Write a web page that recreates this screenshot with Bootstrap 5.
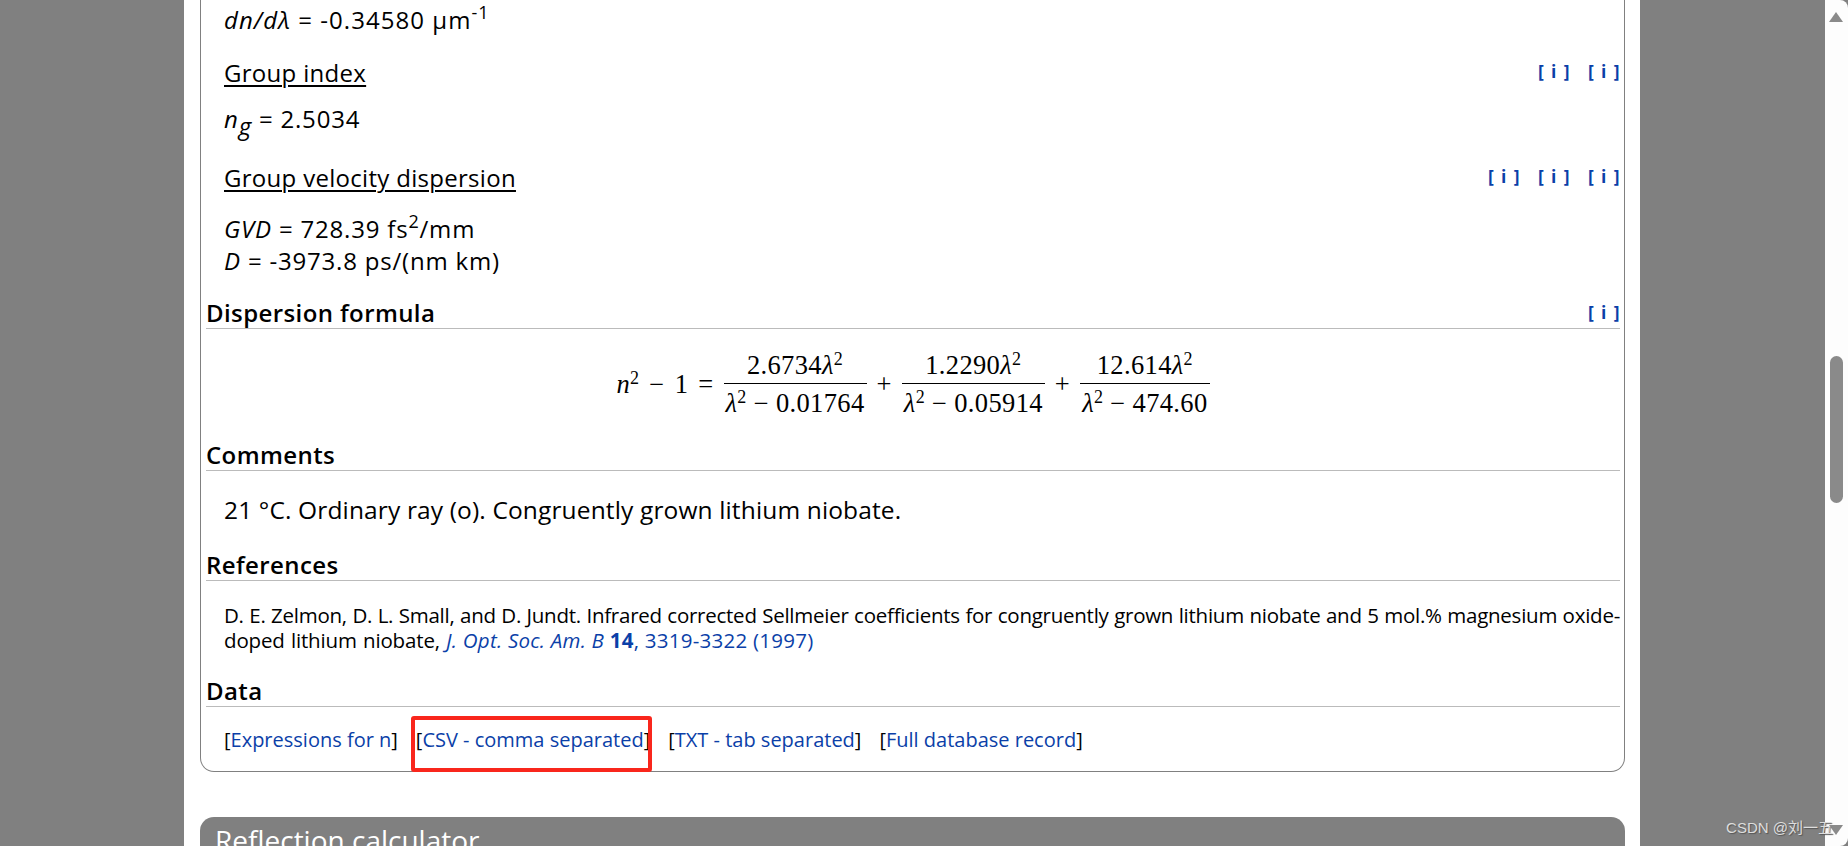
<!DOCTYPE html>
<html lang="en">
<head>
  <meta charset="UTF-8" />
  <title>Refractive index</title>
  <link href="https://cdn.jsdelivr.net/npm/bootstrap@5.3.3/dist/css/bootstrap.min.css" rel="stylesheet">
  <style>
    html, body { height: 846px; overflow: hidden; }
    body {
      background-color: #808080;
      font-family: "Open Sans", "Noto Sans", sans-serif;
      color: #000;
      position: relative;
    }
    a { color: #0b3fa8; text-decoration: none; }
    .page-col {
      width: 1456px;
      height: 846px;
      margin-left: 184px;
      background: #fff;
      padding: 0 15px 0 16px;
      overflow: hidden;
    }
    .info-panel {
      border: 1px solid #808080;
      border-top: 0;
      border-radius: 0 0 14px 14px;
      padding: 0 4px 0 5px;
      height: 772px;
    }
    .sect-title {
      font-size: 24px;
      font-weight: 600;
      letter-spacing: .4px;
      line-height: 26px;
      border-bottom: 1px solid #bbb;
      height: 29px;
    }
    .prop-block { padding-left: 18px; font-size: 24px; letter-spacing: .8px; line-height: 32px; }
    .prop-first { padding-top: 4px; letter-spacing: 1.05px; }
    .prop-title { letter-spacing: .3px; text-decoration: underline; text-decoration-thickness: 2px; text-underline-offset: 3px; }
    .prop-block sup { font-size: 75%; top: -.55em; }
    .prop-block sub { font-size: 100%; bottom: -.3em; }
    .info-links { font-size: 17.5px; font-weight: 700; letter-spacing: 1.4px; line-height: 24px; gap: 17px; margin: 0 -1px 4px 0; }
    .comment-txt { padding-left: 18px; font-size: 24.5px; letter-spacing: .14px; line-height: 32px; }
    .ref-txt { padding-left: 18px; font-size: 20.5px; letter-spacing: -.25px; word-spacing: -1px; line-height: 25px; text-align: justify; }
    .ref-tail { word-spacing: 1px; letter-spacing: -.15px; }
    .ref-txt a { letter-spacing: .25px; word-spacing: 0; }
    .data-links { padding-left: 18px; font-size: 20px; line-height: 26px; gap: 18px; }
    .math-row {
      font-family: "Liberation Serif", serif;
      font-size: 26.5px;
      letter-spacing: .35px;
      height: 113px;
      padding-bottom: 2px;
      gap: 10px;
    }
    .math-lhs { word-spacing: 3px; }
    .math-frac { text-align: center; }
    .math-frac > div { padding: 0 2px; line-height: 31px; white-space: nowrap; }
    .math-frac > div:first-child { border-bottom: 1px solid #000; padding-bottom: 2px; }
    .math-frac > div:last-child { padding-top: 4px; }
    .math-row sup { font-size: 68%; top: -.5em; }
    .csv-box {
      position: absolute;
      left: 411px;
      top: 716px;
      width: 241px;
      height: 56px;
      border: 4px solid #f9261c;
      border-radius: 3px;
    }
    .calc-head {
      background: #808080;
      color: #fff;
      border-radius: 14px 14px 0 0;
      margin-top: 45px;
      height: 60px;
      font-size: 28px;
      padding: 2px 15px;
    }
    .scroll-rail {
      position: absolute;
      top: 0; right: 0;
      width: 23px;
      height: 846px;
      background: #fdfdfd;
      border-radius: 0 8px 8px 0;
    }
    .scroll-thumb {
      position: absolute;
      left: 5px;
      top: 356px;
      width: 13px;
      height: 147px;
      background: #8a8a8a;
      border-radius: 7px;
    }
    .scroll-up, .scroll-down {
      position: absolute;
      left: 4px;
      width: 0; height: 0;
      border-left: 7px solid transparent;
      border-right: 7px solid transparent;
    }
    .scroll-up { top: 12px; border-bottom: 10px solid #8a8a8a; }
    .scroll-down { top: 825px; border-top: 10px solid #8a8a8a; }
    .watermark {
      position: absolute;
      right: 15px;
      top: 817px;
      font-family: "Liberation Sans", "Noto Sans CJK SC", sans-serif;
      font-size: 15px;
      line-height: 21px;
      color: #ddd;
      text-shadow: 1px 1px 1px #555;
    }
  </style>
</head>
<body>
  <div class="page-col">
    <div class="info-panel">
      <div class="prop-block prop-first"><i>dn/dλ</i> = -0.34580 µm<sup>-1</sup></div>

      <div class="d-flex justify-content-between align-items-center" style="margin-top:21px">
        <div class="prop-block prop-title">Group index</div>
        <div class="info-links d-flex"><a href="#">[ i ]</a><a href="#">[ i ]</a></div>
      </div>
      <div class="prop-block" style="margin-top:14px"><i>n<sub>g</sub></i> = 2.5034</div>

      <div class="d-flex justify-content-between align-items-center" style="margin-top:27px">
        <div class="prop-block prop-title">Group velocity dispersion</div>
        <div class="info-links d-flex"><a href="#">[ i ]</a><a href="#">[ i ]</a><a href="#">[ i ]</a></div>
      </div>
      <div class="prop-block" style="margin-top:19px"><i>GVD</i> = 728.39 fs<sup>2</sup>/mm<br><i>D</i> = -3973.8 ps/(nm km)</div>

      <div class="sect-title d-flex justify-content-between" style="margin-top:23px">
        <span>Dispersion formula</span>
        <span class="info-links d-flex"><a href="#">[ i ]</a></span>
      </div>
      <div class="math-row d-flex justify-content-center align-items-center">
        <span class="math-lhs"><i>n</i><sup>2</sup> − 1 =</span>
        <div class="math-frac"><div>2.6734<i>λ</i><sup>2</sup></div><div><i>λ</i><sup>2</sup> − 0.01764</div></div>
        <span>+</span>
        <div class="math-frac"><div>1.2290<i>λ</i><sup>2</sup></div><div><i>λ</i><sup>2</sup> − 0.05914</div></div>
        <span>+</span>
        <div class="math-frac"><div>12.614<i>λ</i><sup>2</sup></div><div><i>λ</i><sup>2</sup> − 474.60</div></div>
      </div>

      <div class="sect-title">Comments</div>
      <div class="comment-txt" style="margin-top:23px">21 °C. Ordinary ray (o). Congruently grown lithium niobate.</div>

      <div class="sect-title" style="margin-top:26px">References</div>
      <div class="ref-txt" style="margin-top:22px">D. E. Zelmon, D. L. Small, and D. Jundt. Infrared corrected Sellmeier coefficients for congruently grown lithium niobate and 5 mol.% magnesium oxide-<span class="ref-tail">doped lithium niobate, </span><a href="#"><i>J. Opt. Soc. Am. B</i> <b>14</b>, 3319-3322 (1997)</a></div>

      <div class="sect-title" style="margin-top:25px">Data</div>
      <div class="data-links d-flex" style="margin-top:20px">
        <span>[<a href="#">Expressions for n</a>]</span>
        <span>[<a href="#">CSV - comma separated</a>]</span>
        <span>[<a href="#">TXT - tab separated</a>]</span>
        <span>[<a href="#">Full database record</a>]</span>
      </div>
    </div>
    <div class="calc-head">Reflection calculator</div>
  </div>
  <div class="csv-box"></div>
  <div class="scroll-rail">
    <div class="scroll-up"></div>
    <div class="scroll-thumb"></div>
    <div class="scroll-down"></div>
  </div>
  <div class="watermark">CSDN @刘一五</div>
</body>
</html>
